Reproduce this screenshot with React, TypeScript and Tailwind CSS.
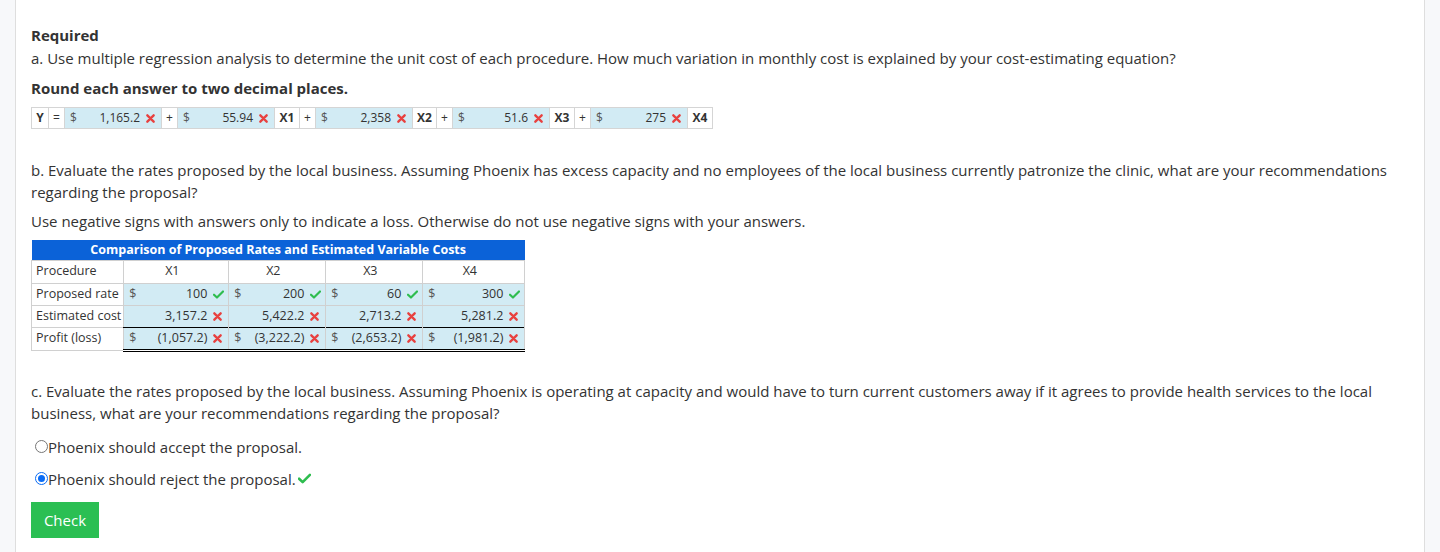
import React from 'react';

const font = { fontFamily: '"Open Sans", "Liberation Sans", sans-serif' };

function Check() {
  return (
    <svg viewBox="0 0 12 10" className="inline-block h-[9px] w-[11px] shrink-0" aria-hidden>
      <path d="M1 5.2 L4.3 8.4 L11 1.6" fill="none" stroke="#2ebd4f" strokeWidth="2.4" strokeLinecap="round" strokeLinejoin="round" />
    </svg>
  );
}

function Cross() {
  return (
    <svg viewBox="0 0 10 10" className="inline-block h-[9px] w-[9px] shrink-0" aria-hidden>
      <path d="M1.5 1.5 L8.5 8.5 M8.5 1.5 L1.5 8.5" fill="none" stroke="#e8413f" strokeWidth="2.6" strokeLinecap="round" />
    </svg>
  );
}

function Mark({ ok }: { ok: boolean }) {
  return <span className="ml-[6px] flex w-[11px] items-center">{ok ? <Check /> : <Cross />}</span>;
}

function EqInput({ value }: { value: string }) {
  return (
    <div className="flex h-full w-[97px] items-center border-r border-[#d5d5d5] bg-[#d2ebf4] pl-[5px] pr-[4px]">
      <span className="text-[#555]">$</span>
      <span className="flex-1 text-right">{value}</span>
      <Mark ok={false} />
    </div>
  );
}

function EqCell({ children, w, bold }: { children: React.ReactNode; w: string; bold?: boolean }) {
  return (
    <div className={`flex h-full items-center justify-center border-r border-[#d5d5d5] ${w} ${bold ? 'font-bold' : ''}`}>
      {children}
    </div>
  );
}

type Val = { v: string; ok: boolean; dollar: boolean };

const rows: { label: string; vals: Val[] }[] = [
  {
    label: 'Proposed rate',
    vals: [
      { v: '100', ok: true, dollar: true },
      { v: '200', ok: true, dollar: true },
      { v: '60', ok: true, dollar: true },
      { v: '300', ok: true, dollar: true },
    ],
  },
  {
    label: 'Estimated cost',
    vals: [
      { v: '3,157.2', ok: false, dollar: false },
      { v: '5,422.2', ok: false, dollar: false },
      { v: '2,713.2', ok: false, dollar: false },
      { v: '5,281.2', ok: false, dollar: false },
    ],
  },
  {
    label: 'Profit (loss)',
    vals: [
      { v: '(1,057.2)', ok: false, dollar: true },
      { v: '(3,222.2)', ok: false, dollar: true },
      { v: '(2,653.2)', ok: false, dollar: true },
      { v: '(1,981.2)', ok: false, dollar: true },
    ],
  },
];

const colW = ['w-[105px]', 'w-[97px]', 'w-[97px]', 'w-[102px]'];

function Radio({ checked }: { checked: boolean }) {
  return checked ? (
    <span className="mx-[4px] flex h-[13px] w-[13px] shrink-0 items-center justify-center rounded-full border-[1.5px] border-[#0a6cf5] bg-white">
      <span className="h-[7px] w-[7px] rounded-full bg-[#0a6cf5]" />
    </span>
  ) : (
    <span className="mx-[4px] inline-block h-[13px] w-[13px] shrink-0 rounded-full border border-[#767676] bg-white" />
  );
}

export default function App() {
  return (
    <div className="flex h-[552px] w-[1440px] bg-[#f7f8fa]" style={font}>
      <div className="ml-[15px] h-full w-[1410px] border-x border-[#dedede] bg-white pl-[15px] pt-6 text-[15px] leading-[22px] text-[#333]">
        <p className="font-bold">Required</p>
        <p className="mt-px">
          a. Use multiple regression analysis to determine the unit cost of each procedure. How much variation in monthly cost is explained by your cost-estimating equation?
        </p>
        <p className="mt-2 font-bold">Round each answer to two decimal places.</p>

        <div className="mt-[8px] flex h-[22px] w-fit border-y border-l border-[#d5d5d5] text-[12px] leading-none">
          <EqCell w="w-[17px]" bold>Y</EqCell>
          <EqCell w="w-[16px]">=</EqCell>
          <EqInput value="1,165.2" />
          <EqCell w="w-[16px]">+</EqCell>
          <EqInput value="55.94" />
          <EqCell w="w-[25px]" bold>X1</EqCell>
          <EqCell w="w-[16px]">+</EqCell>
          <EqInput value="2,358" />
          <EqCell w="w-[24px]" bold>X2</EqCell>
          <EqCell w="w-[16px]">+</EqCell>
          <EqInput value="51.6" />
          <EqCell w="w-[25px]" bold>X3</EqCell>
          <EqCell w="w-[16px]">+</EqCell>
          <EqInput value="275" />
          <EqCell w="w-[25px]" bold>X4</EqCell>
        </div>

        <p className="mt-[30px] pr-6">
          b. Evaluate the rates proposed by the local business. Assuming Phoenix has excess capacity and no employees of the local business currently patronize the clinic, what are your recommendations regarding the proposal?
        </p>
        <p className="mt-[7px]">Use negative signs with answers only to indicate a loss. Otherwise do not use negative signs with your answers.</p>

        <table className="mt-2 border-collapse text-[12.5px] leading-none">
          <thead>
            <tr>
              <th colSpan={5} className="h-[20px] bg-[#0b62d8] text-center font-bold text-white">
                Comparison of Proposed Rates and Estimated Variable Costs
              </th>
            </tr>
          </thead>
          <tbody>
            <tr className="h-[23px]">
              <td className="w-[92px] border border-[#d0d0d0] pl-[4px] text-left">Procedure</td>
              {['X1', 'X2', 'X3', 'X4'].map((x, i) => (
                <td key={x} className={`${colW[i]} border border-[#d0d0d0] pr-[8px] text-center`}>
                  {x}
                </td>
              ))}
            </tr>
            {rows.map((r, ri) => {
              const profit = ri === 2;
              return (
                <tr key={r.label} className={profit ? 'h-[23px]' : 'h-[22px]'}>
                  <td className="border border-[#d0d0d0] pl-[4px] pr-[2px] text-left whitespace-nowrap">{r.label}</td>
                  {r.vals.map((c, i) => (
                    <td
                      key={i}
                      className={`${colW[i]} border-x border-[#d0d0d0] bg-[#d2ebf4] p-0 ${
                        profit ? 'border-t border-t-black border-b-[3px] border-b-black border-double' : 'border-b'
                      }`}
                    >
                      <div className="flex items-center pl-[5px] pr-[4px]">
                        <span className="w-[8px] text-[#555]">{c.dollar ? '$' : ''}</span>
                        <span className="flex-1 text-right">{c.v}</span>
                        <Mark ok={c.ok} />
                      </div>
                    </td>
                  ))}
                </tr>
              );
            })}
          </tbody>
        </table>

        <p className="mt-[28px] pr-6">
          c. Evaluate the rates proposed by the local business. Assuming Phoenix is operating at capacity and would have to turn current customers away if it agrees to provide health services to the local business, what are your recommendations regarding the proposal?
        </p>
        <div className="mt-[12px] flex items-center">
          <Radio checked={false} />
          <span className="-ml-[4px]">Phoenix should accept the proposal.</span>
        </div>
        <div className="mt-[10px] flex items-center">
          <Radio checked />
          <span className="-ml-[4px]">Phoenix should reject the proposal.</span>
          <span className="ml-[2px] flex"><svg viewBox="0 0 12 10" className="h-[11px] w-[13px]"><path d="M1 5.2 L4.3 8.4 L11 1.6" fill="none" stroke="#2ebd4f" strokeWidth="2.4" strokeLinecap="round" strokeLinejoin="round" /></svg></span>
        </div>
        <button className="mt-3 h-[36px] w-[68px] bg-[#2bbf53] text-[15px] text-white">Check</button>
      </div>
    </div>
  );
}
